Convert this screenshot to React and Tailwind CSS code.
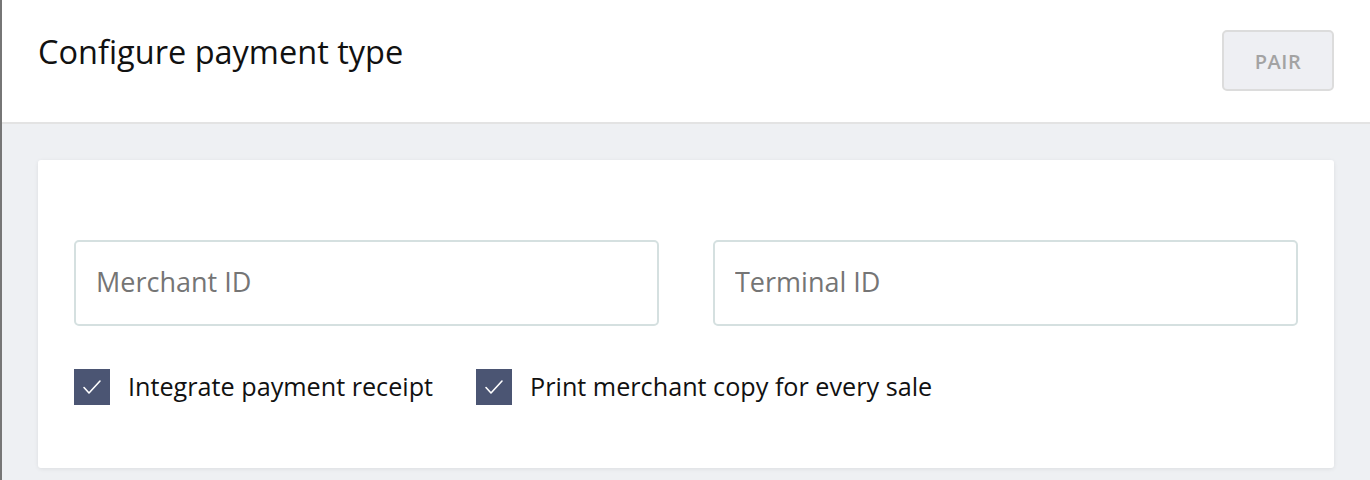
import React, { useState } from "react";

const Check = ({ checked, onChange, label }) => (
  <label className="flex items-center cursor-pointer select-none">
    <span
      className={`w-9 h-9 flex items-center justify-center ${
        checked ? "bg-[#4b5573]" : "bg-white border-2 border-[#d5dfdf]"
      }`}
      onClick={onChange}
    >
      {checked && (
        <svg width="22" height="22" viewBox="0 0 22 22" fill="none">
          <path d="M3 11.5l5 5.5L19 5" stroke="white" strokeWidth="1.6" strokeLinecap="round" strokeLinejoin="round" />
        </svg>
      )}
    </span>
    <span className="ml-[18px] text-[25.2px] text-[#111]">{label}</span>
  </label>
);

export default function App() {
  const [merchantId, setMerchantId] = useState("");
  const [terminalId, setTerminalId] = useState("");
  const [integrate, setIntegrate] = useState(true);
  const [printCopy, setPrintCopy] = useState(true);

  return (
    <div className="min-h-[480px] bg-[#eef0f3] border-l-2 border-[#767676] font-['Open_Sans',sans-serif]">
      <header className="h-[124px] bg-white border-b-2 border-[#e3e3e3] flex justify-between pl-[36px] pr-[36px]">
        <h1 className="text-[32.5px] text-[#111] mt-[30px] leading-[44px]">Configure payment type</h1>
        <button
          disabled
          className="mt-[30px] w-[112px] h-[61px] pt-[3px] rounded-[5px] bg-[#eeeff3] border-2 border-[#dcdcdc] text-[#a3a3a3] text-[20px] font-semibold tracking-wide"
        >
          PAIR
        </button>
      </header>

      <div className="pt-[36px] pl-[36px] pr-[36px]">
        <div className="bg-white rounded-[3px] shadow-[0_1px_4px_rgba(0,0,0,0.08)] px-[36px] pt-[80px] pb-[62px]">
          <div className="grid grid-cols-2 gap-[54px]">
            <input
              value={merchantId}
              onChange={(e) => setMerchantId(e.target.value)}
              placeholder="Merchant ID"
              className="h-[86px] rounded-[5px] border-2 border-[#d5e0e0] px-[20px] pb-[4px] text-[27px] text-[#333] placeholder:text-[#757575] outline-none"
            />
            <input
              value={terminalId}
              onChange={(e) => setTerminalId(e.target.value)}
              placeholder="Terminal ID"
              className="h-[86px] rounded-[5px] border-2 border-[#d5e0e0] px-[20px] pb-[4px] text-[27px] text-[#333] placeholder:text-[#757575] outline-none"
            />
          </div>
          <div className="flex gap-[43px] mt-[42px]">
            <Check checked={integrate} onChange={() => setIntegrate(!integrate)} label="Integrate payment receipt" />
            <Check checked={printCopy} onChange={() => setPrintCopy(!printCopy)} label="Print merchant copy for every sale" />
          </div>
        </div>
      </div>
    </div>
  );
}
